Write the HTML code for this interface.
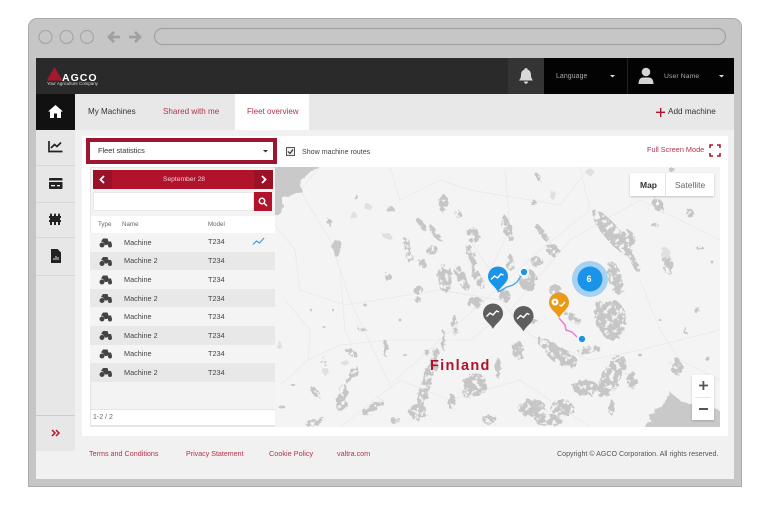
<!DOCTYPE html>
<html><head><meta charset="utf-8"><style>
html,body{margin:0;padding:0;background:#fff}
body{width:768px;height:513px;position:relative;overflow:hidden;font-family:"Liberation Sans",sans-serif;filter:blur(.3px)}
div,span{position:absolute;white-space:nowrap;box-sizing:border-box}
.t{line-height:12px;height:12px}
.r{background:#f4f4f4;left:90px;width:185px}
.r.e{background:#e8e8e8}
.n{left:124px;font-size:7.300px;color:#444}
.m{left:208px;font-size:7.300px;color:#444}
.d{left:36px;width:39px;height:1px;background:#d6d6d6}
.f{color:#b3334a;top:448px}
</style></head><body>
<div style="left:28px;top:18px;width:714px;height:469px;background:#c6c6c6;border:1px solid #ababab;border-radius:9px 9px 0 0"></div>
<svg style="position:absolute;left:0;top:0" width="768" height="60" fill="none">
<circle cx="45.500" cy="37" r="6.500" stroke="#a6a6a6" stroke-width="1.200"/><circle cx="66.500" cy="37" r="6.500" stroke="#a6a6a6" stroke-width="1.200"/><circle cx="87" cy="37" r="6.500" stroke="#a6a6a6" stroke-width="1.200"/>
<path d="M120 37H110M114 32l-5 5 5 5" stroke="#a0a0a0" stroke-width="2.800"/><path d="M129 37H139M135 32l5 5-5 5" stroke="#a0a0a0" stroke-width="2.800"/>
<rect x="154.500" y="28.500" width="571" height="16" rx="8" stroke="#a2a2a2" stroke-width="1.200"/>
</svg>
<div style="left:36px;top:58px;width:698px;height:421px;background:#f1f1f1"></div>
<div style="left:36px;top:58px;width:698px;height:36px;background:#2a2a2a"></div>
<div style="left:508px;top:58px;width:36px;height:36px;background:#343434"></div>
<div style="left:544px;top:58px;width:190px;height:36px;background:#030303"></div>
<div style="left:627px;top:58px;width:1px;height:36px;background:#222"></div>
<svg style="position:absolute;left:46px;top:66px" width="18" height="15"><path d="M8.500 1L16.500 14.500H0.800Z" fill="#a8182c"/></svg>
<div class="t" style="left:62px;top:71.500px;font-size:10.500px;font-weight:bold;color:#fff;letter-spacing:1px">AGCO</div>
<div class="t" style="left:47px;top:78px;font-size:4.400px;color:#ddd">Your Agriculture Company</div>
<svg style="position:absolute;left:518px;top:67px" width="16" height="18"><path d="M8 1c1 0 1.500.7 1.500 1.500C12 3.300 13 5.500 13 8c0 3 1 4 2 5.500H1C2 12 3 11 3 8c0-2.500 1-4.700 3.500-5.500C6.500 1.700 7 1 8 1Z M6 14.500h4C10 16 9 16.800 8 16.800S6 16 6 14.500Z" fill="#d8d8d8"/></svg>
<div class="t" style="left:556px;top:71px;font-size:6.900px;color:#aaa;letter-spacing:.1px">Language</div>
<div class="t" style="left:664px;top:71px;font-size:6.800px;color:#aaa;letter-spacing:.1px">User Name</div>
<svg style="position:absolute;left:610px;top:75px" width="120" height="4" fill="#ddd"><path d="M0 0h5L2.500 2.500Z"/><path d="M109 0h5l-2.500 2.500Z"/></svg>
<svg style="position:absolute;left:637px;top:67px" width="18" height="18" fill="#d4d4d4"><circle cx="9" cy="5" r="4.300"/><path d="M1.500 17c0-4.500 2-6.500 4.500-6.500h6c2.500 0 4.500 2 4.500 6.500Z"/></svg>
<!-- sidebar -->
<div style="left:36px;top:94px;width:39px;height:357px;background:#e7e7e7"></div>
<div style="left:36px;top:94px;width:39px;height:36px;background:#111"></div>
<div class="d" style="top:165px"></div><div class="d" style="top:202px"></div><div class="d" style="top:237px"></div><div class="d" style="top:275px"></div><div class="d" style="top:415px;background:#ccc"></div>
<svg style="position:absolute;left:36px;top:94px" width="39" height="190">
<path d="M19.500 11L12 17.500h2V24h4v-4.500h3V24h4v-6.500h2Z" fill="#fff"/>
<path d="M13 47v10.500h13.500" stroke="#222" stroke-width="1.700" fill="none"/><path d="M15 54l3.500-3.500 2.500 2 4-4" stroke="#222" stroke-width="1.700" fill="none"/>
<rect x="13" y="84" width="13.500" height="11" rx="1" fill="#222"/><rect x="13" y="86.500" width="13.500" height="1.500" fill="#eee"/><rect x="15" y="91" width="4" height="1.300" fill="#eee"/><rect x="21" y="91" width="3" height="1.300" fill="#eee"/>
<path d="M14 120.500l1-1.500 1 1.500V122h2v-1.500l1-1.500 1 1.500V122h2v-1.500l1-1.500 1 1.500V122h1v2h-1v2h1v2h-1v3h-2v-3h-2v3h-2v-3h-2v3h-2v-3h-1v-2h1v-2h-1v-2h1Z" fill="#222"/>
<path d="M15 155h6.500l3.500 3.500V169H15Z" fill="#222"/><path d="M18 166v-2M20 166v-4M22 166v-3" stroke="#ddd" stroke-width="1"/>
</svg>
<svg style="position:absolute;left:51px;top:429px" width="9" height="8" fill="none" stroke="#b0132b" stroke-width="1.500"><path d="M1 1l3 3-3 3M5 1l3 3-3 3"/></svg>
<!-- tabs -->
<div style="left:75px;top:94px;width:659px;height:36px;background:#e8e8e8"></div>
<div style="left:235px;top:94px;width:74px;height:36px;background:#fff"></div>
<div class="t" style="left:88px;top:106px;font-size:8.100px;color:#333">My Machines</div>
<div class="t" style="left:163px;top:106px;font-size:8.100px;color:#b3334a">Shared with me</div>
<div class="t" style="left:247px;top:106px;font-size:8px;color:#b3334a">Fleet overview</div>
<svg style="position:absolute;left:656px;top:108px" width="9" height="9"><path d="M4 0h1.400v3.600H9V5H5.400v4H4V5H0V3.600h4Z" fill="#b0132b"/></svg>
<div class="t" style="left:668px;top:106px;font-size:8.200px;color:#333">Add machine</div>
<!-- panel -->
<div style="left:82px;top:136px;width:646px;height:300px;background:#fff"></div>
<div style="left:86px;top:138px;width:191px;height:26px;background:#fff;border:4px solid #9d1530"></div>
<div class="t" style="left:98px;top:145px;font-size:7.400px;color:#333">Fleet statistics</div>
<svg style="position:absolute;left:263px;top:150px" width="6" height="3"><path d="M0 0h5L2.500 2.500Z" fill="#333"/></svg>
<svg style="position:absolute;left:286px;top:147px" width="10" height="10"><rect x=".5" y=".5" width="8" height="8" fill="#eee" stroke="#555"/><path d="M2 4.500l2 2 3-4" stroke="#333" stroke-width="1.200" fill="none"/></svg>
<div class="t" style="left:302px;top:146px;font-size:7.100px;color:#444">Show machine routes</div>
<div class="t" style="left:647px;top:144px;font-size:7.300px;color:#b3334a">Full Screen Mode</div>
<svg style="position:absolute;left:709px;top:144px" width="12" height="13" fill="none" stroke="#b0132b" stroke-width="1.600"><path d="M1 4V1h3M8 1h3v3M11 9v3H8M4 12H1V9"/></svg>
<!-- map -->
<svg style="position:absolute;left:0;top:0" width="768" height="513">
<defs>
<clipPath id="c"><rect x="275" y="167" width="445" height="260"/></clipPath>
<filter id="j" filterUnits="userSpaceOnUse" x="260" y="150" width="480" height="300"><feTurbulence type="fractalNoise" baseFrequency=".16" numOctaves="3" seed="5"/><feDisplacementMap in="SourceGraphic" scale="6"/></filter>
<filter id="h" filterUnits="userSpaceOnUse" x="260" y="150" width="480" height="300"><feTurbulence type="fractalNoise" baseFrequency=".2" numOctaves="3" seed="8" result="n"/><feDisplacementMap in="SourceGraphic" in2="n" scale="7" result="d"/><feColorMatrix in="n" type="matrix" values="0 0 0 0 0 0 0 0 0 0 0 0 0 0 0 9 0 0 0 -3.100" result="m"/><feComposite in="d" in2="m" operator="in"/></filter>
<path id="pin" d="M0 15.500C-2.500 10-10 6.500-10 0A10 10 0 1 1 10 0C10 6.500 2.500 10 0 15.500Z"/>
<g id="tr" fill="#444"><circle cx="3" cy="7" r="2.500"/><circle cx="11" cy="7.500" r="2"/><path d="M2 3.500L4 .5h4.500l1 3H12l1 3-2-1-3 1.500H6L4 4Z"/></g>
</defs>
<g clip-path="url(#c)">
<rect x="275" y="167" width="445" height="260" fill="#f4f4f4"/>
<g fill="none" stroke="#e8e8e8" stroke-width=".7">
<path d="M320 167L300 190 330 240 342 275 350 300 390 385 440 340 485 300 540 250 590 210 580 167"/>
<path d="M275 225L295 250 300 290 345 305 440 290 500 300 530 335 590 360 640 350 720 330"/>
<path d="M285 300L310 330 308 360 280 385M308 360L340 345 390 340 470 340 510 310 570 240 640 200 720 240"/>
<path d="M390 167L400 200 440 180 470 190 500 195 560 205 590 167M640 280L660 330 680 360 720 380"/>
<path d="M340 270L345 330 352 345M470 240L490 270 510 230 505 170M340 427L400 380 450 400 520 380 590 427"/>
</g>
<g fill="#c9c9c9" filter="url(#j)">
<path d="M272 165H322L308 175 300 182 302 192 292 195 283 198 282 212 272 216Z"/>
<path d="M645 430L652 412 662 408 670 392 682 402 700 406 725 412V430Z"/>
<ellipse cx="337" cy="248" rx="4.500" ry="9"/><ellipse cx="390" cy="209" rx="4" ry="3"/>
</g>
<g fill="#c6c6c6" filter="url(#h)">
<ellipse cx="356" cy="197" rx="2.500" ry="2"/><ellipse cx="329" cy="222" rx="3" ry="3"/>
<ellipse cx="408" cy="250" rx="3" ry="14" transform="rotate(-10 408 250)"/><ellipse cx="443" cy="203" rx="5" ry="9"/><ellipse cx="422" cy="225" rx="3" ry="8" transform="rotate(-35 422 225)"/><ellipse cx="435" cy="233" rx="3" ry="10" transform="rotate(-35 435 233)"/>
<ellipse cx="458" cy="214" rx="3" ry="4"/><ellipse cx="473" cy="235" rx="6" ry="8"/><ellipse cx="472" cy="256" rx="4" ry="12" transform="rotate(-20 472 256)"/><ellipse cx="445" cy="278" rx="7" ry="14"/>
<ellipse cx="422" cy="263" rx="4" ry="5"/><ellipse cx="432" cy="250" rx="6" ry="5"/><ellipse cx="418" cy="290" rx="5" ry="4"/><ellipse cx="388" cy="277" rx="3" ry="4"/><ellipse cx="462" cy="278" rx="5" ry="14" transform="rotate(-25 462 278)"/><ellipse cx="478" cy="278" rx="4" ry="12" transform="rotate(-25 478 278)"/>
<ellipse cx="612" cy="233" rx="8" ry="30" transform="rotate(-40 612 233)"/><ellipse cx="627" cy="240" rx="8" ry="10"/><ellipse cx="634" cy="262" rx="3" ry="12" transform="rotate(-25 634 262)"/><ellipse cx="615" cy="278" rx="7" ry="17" transform="rotate(-15 615 278)"/>
<ellipse cx="668" cy="265" rx="5" ry="10"/><ellipse cx="658" cy="205" rx="5" ry="8" transform="rotate(-30 658 205)"/><ellipse cx="690" cy="213" rx="4" ry="5" transform="rotate(-30 690 213)"/><ellipse cx="542" cy="233" rx="3" ry="11" transform="rotate(-35 542 233)"/><ellipse cx="672" cy="170" rx="3" ry="2.500"/><ellipse cx="533" cy="202" rx="3" ry="3"/><ellipse cx="538" cy="177" rx="2" ry="6" transform="rotate(-30 538 177)"/>
<ellipse cx="507" cy="228" rx="4" ry="14" transform="rotate(-15 507 228)"/><ellipse cx="553" cy="250" rx="6" ry="6"/><ellipse cx="537" cy="262" rx="6" ry="5"/><ellipse cx="528" cy="280" rx="9" ry="11"/><ellipse cx="510" cy="262" rx="4" ry="8"/><ellipse cx="555" cy="290" rx="6" ry="6"/><ellipse cx="505" cy="296" rx="6" ry="6"/>
<ellipse cx="612" cy="320" rx="14" ry="20"/><ellipse cx="600" cy="315" rx="5" ry="14"/><ellipse cx="612" cy="377" rx="9" ry="24" transform="rotate(30 612 377)"/><ellipse cx="562" cy="357" rx="17" ry="8" transform="rotate(25 562 357)"/><ellipse cx="548" cy="345" rx="12" ry="5" transform="rotate(25 548 345)"/><ellipse cx="585" cy="388" rx="14" ry="8"/><ellipse cx="573" cy="318" rx="10" ry="4" transform="rotate(30 573 318)"/><ellipse cx="590" cy="350" rx="12" ry="3" transform="rotate(-10 590 350)"/>
<ellipse cx="677" cy="367" rx="6" ry="8"/><ellipse cx="532" cy="408" rx="14" ry="9"/><ellipse cx="562" cy="408" rx="12" ry="8"/><ellipse cx="548" cy="420" rx="14" ry="6"/><ellipse cx="518" cy="350" rx="6" ry="9"/><ellipse cx="498" cy="368" rx="3" ry="10"/><ellipse cx="632" cy="380" rx="6" ry="8"/><ellipse cx="612" cy="408" rx="3" ry="8"/><ellipse cx="530" cy="320" rx="8" ry="4"/>
<ellipse cx="418" cy="412" rx="9" ry="8"/><ellipse cx="425" cy="385" rx="5" ry="22" transform="rotate(15 425 385)"/><ellipse cx="434" cy="362" rx="4" ry="14" transform="rotate(15 434 362)"/><ellipse cx="342" cy="398" rx="5" ry="14" transform="rotate(10 342 398)"/><ellipse cx="352" cy="375" rx="3" ry="10" transform="rotate(35 352 375)"/><ellipse cx="352" cy="353" rx="8" ry="3" transform="rotate(30 352 353)"/><ellipse cx="385" cy="348" rx="3" ry="8"/><ellipse cx="315" cy="392" rx="3" ry="7" transform="rotate(-35 315 392)"/><ellipse cx="372" cy="408" rx="14" ry="4" transform="rotate(-30 372 408)"/><ellipse cx="315" cy="422" rx="10" ry="3" transform="rotate(-20 315 422)"/>
<ellipse cx="475" cy="385" rx="12" ry="12"/><ellipse cx="452" cy="402" rx="4" ry="8"/><ellipse cx="468" cy="395" rx="4" ry="4"/><ellipse cx="455" cy="325" rx="3" ry="10"/><ellipse cx="443" cy="340" rx="2" ry="10"/><ellipse cx="427" cy="352" rx="3" ry="3"/><ellipse cx="475" cy="302" rx="8" ry="6"/><ellipse cx="418" cy="300" rx="3" ry="3"/><ellipse cx="490" cy="420" rx="7" ry="5"/><ellipse cx="395" cy="420" rx="5" ry="4"/>
<ellipse cx="363" cy="330" rx="4" ry="2"/><ellipse cx="323" cy="360" rx="1.500" ry="5"/><ellipse cx="700" cy="248" rx="4" ry="2"/><ellipse cx="655" cy="225" rx="3" ry="3"/><ellipse cx="697" cy="310" rx="2" ry="4"/><ellipse cx="685" cy="330" rx="1.500" ry="4"/><ellipse cx="707" cy="358" rx="2" ry="3"/>
</g>
<g fill="#c9c9c9"><ellipse cx="311" cy="310" rx="1" ry="1.500"/><ellipse cx="333" cy="310" rx="1" ry="1.500"/><ellipse cx="324" cy="327" rx="1.500" ry="1"/><ellipse cx="293" cy="385" rx="2.500" ry="1"/><ellipse cx="282" cy="407" rx="3.500" ry="1.500"/><ellipse cx="405" cy="355" rx="2" ry="1"/><ellipse cx="400" cy="320" rx="1.500" ry="1.500"/><ellipse cx="365" cy="305" rx="2" ry="1.500"/><ellipse cx="712" cy="262" rx="1.500" ry="1.500"/><ellipse cx="640" cy="184" rx="1" ry="1.500"/><ellipse cx="660" cy="320" rx="1.500" ry="1"/><ellipse cx="640" cy="355" rx="2" ry="1.500"/></g>
<g fill="#e0e0e0" filter="url(#j)"><ellipse cx="368" cy="207" rx="4" ry="3"/><ellipse cx="353" cy="215" rx="3" ry="4"/><ellipse cx="387" cy="236" rx="6" ry="3" transform="rotate(25 387 236)"/><ellipse cx="590" cy="172" rx="4" ry="3"/><ellipse cx="553" cy="195" rx="3" ry="4"/><ellipse cx="665" cy="253" rx="5" ry="5"/><ellipse cx="279" cy="345" rx="2.500" ry="4"/><ellipse cx="345" cy="363" rx="4" ry="3"/><ellipse cx="326" cy="372" rx="3" ry="4"/></g>
<polyline points="498,292 507,287 513,285 517,282 523,273" fill="none" stroke="#4aa3e8" stroke-width="1.300"/>
<polyline points="559,318 565,325 566,330 572,332 577,337" fill="none" stroke="#ee7ad8" stroke-width="1.500"/>
<circle cx="524" cy="272" r="5" fill="#fff"/><circle cx="524" cy="272" r="3.200" fill="#1a94e8"/>
<circle cx="582" cy="339" r="4.500" fill="#fff"/><circle cx="582" cy="339" r="3.200" fill="#1a94e8"/>
<circle cx="590" cy="279" r="18" fill="#a5d2f2"/><circle cx="590" cy="279" r="12.500" fill="#1a94e8"/>
<use href="#pin" x="498" y="276.500" fill="#1a94e8"/><use href="#pin" x="493" y="313.500" fill="#5e5e5e"/><use href="#pin" x="523.500" y="316" fill="#5e5e5e"/><use href="#pin" x="559" y="302.500" fill="#e89a18"/>
<g fill="none" stroke="#fff" stroke-width="1.400">
<path d="M491 279.500l3.500-3.500 3 2 3.500-4 2.500 1"/><path d="M486.500 316.500l3.500-3.500 3 2 3.500-4 2.500 1"/><path d="M517 319l3.500-3.500 3 2 3.500-4 2.500 1"/><path d="M559.500 305l2 1 3.500-4"/>
</g>
<circle cx="555" cy="302" r="3.500" fill="#fff"/><circle cx="555" cy="302" r="1.200" fill="#e89a18"/>
</g>
</svg>
<div class="t" style="left:430px;top:358px;height:16px;line-height:16px;font-size:14.500px;font-weight:bold;color:#b0132b;letter-spacing:1.300px">Finland</div>
<div class="t" style="left:586.500px;top:273px;font-size:9px;font-weight:bold;color:#fff">6</div>
<div style="left:630px;top:173px;width:84px;height:23px;background:#fff;box-shadow:0 1px 2px rgba(0,0,0,.2)"></div>
<div style="left:665px;top:173px;width:1px;height:23px;background:#e6e6e6"></div>
<div class="t" style="left:640px;top:179px;font-size:8.500px;font-weight:bold;color:#333">Map</div>
<div class="t" style="left:675px;top:179px;font-size:8.500px;color:#666">Satellite</div>
<div style="left:692px;top:375px;width:22px;height:45px;background:#fff;box-shadow:0 1px 2px rgba(0,0,0,.2)"></div>
<div style="left:695px;top:397px;width:16px;height:1px;background:#e6e6e6"></div>
<svg style="position:absolute;left:698px;top:380px" width="11" height="36" fill="#555"><path d="M4.500 1h1.800v3.600H10v1.800H6.300V10H4.500V6.400H1V4.600h3.500Z"/><rect x="1" y="28" width="9" height="2"/></svg>
<!-- list -->
<div style="left:90px;top:167px;width:185px;height:260px;background:#f3f3f3;border:1px solid #e6e6e6;border-right:0"></div>
<div style="left:93px;top:170px;width:180px;height:19px;background:#b0132b;border-radius:1px"></div>
<div style="left:93px;top:170px;width:19px;height:19px;background:#9a1128"></div>
<div style="left:254px;top:170px;width:19px;height:19px;background:#9a1128"></div>
<svg style="position:absolute;left:93px;top:170px" width="180" height="19" fill="none" stroke="#fff" stroke-width="1.800"><path d="M11 6L7.500 9.500 11 13M169 6l3.500 3.500L169 13"/></svg>
<div class="t" style="left:163px;top:174px;font-size:6.700px;color:#f3cdd3">September 28</div>
<div style="left:93px;top:192px;width:161px;height:19px;background:#fff;border:1px solid #e8e8e8"></div>
<div style="left:254px;top:192px;width:18px;height:19px;background:#b0132b"></div>
<svg style="position:absolute;left:258px;top:197px" width="10" height="10" fill="none" stroke="#fff" stroke-width="1.500"><circle cx="4" cy="4" r="2.700"/><path d="M6 6l3 3"/></svg>
<div style="left:91px;top:216px;width:184px;height:17px;background:#fff"></div>
<div class="t" style="left:98px;top:219px;font-size:6.200px;color:#666">Type</div>
<div class="t" style="left:122px;top:219px;font-size:6.200px;color:#666">Name</div>
<div class="t" style="left:208px;top:219px;font-size:6.200px;color:#666">Model</div>
<div class="r" style="top:233px;height:19px"></div><div class="r e" style="top:252px;height:18px"></div><div class="r" style="top:270px;height:19px"></div><div class="r e" style="top:289px;height:18px"></div><div class="r" style="top:307px;height:19px"></div><div class="r e" style="top:326px;height:19px"></div><div class="r" style="top:345px;height:18px"></div><div class="r e" style="top:363px;height:19px"></div>
<div class="t n" style="top:237px">Machine</div><div class="t m" style="top:236px">T234</div>
<div class="t n" style="top:255px">Machine 2</div><div class="t m" style="top:255px">T234</div>
<div class="t n" style="top:274px">Machine</div><div class="t m" style="top:274px">T234</div>
<div class="t n" style="top:293px">Machine 2</div><div class="t m" style="top:293px">T234</div>
<div class="t n" style="top:311px">Machine</div><div class="t m" style="top:311px">T234</div>
<div class="t n" style="top:330px">Machine 2</div><div class="t m" style="top:330px">T234</div>
<div class="t n" style="top:348px">Machine</div><div class="t m" style="top:348px">T234</div>
<div class="t n" style="top:367px">Machine 2</div><div class="t m" style="top:367px">T234</div>
<svg style="position:absolute;left:99px;top:237px" width="16" height="145">
<use href="#tr" y="1"/><use href="#tr" y="19.500"/><use href="#tr" y="38"/><use href="#tr" y="56.500"/><use href="#tr" y="75"/><use href="#tr" y="93.500"/><use href="#tr" y="112"/><use href="#tr" y="130.500"/>
</svg>
<svg style="position:absolute;left:252px;top:237px" width="14" height="9" fill="none" stroke="#3f9ae6" stroke-width="1.200"><path d="M1 7.500l3.500-3.500 3 2 4.500-5"/></svg>
<div style="left:90px;top:409px;width:185px;height:17px;background:#fff;border-top:1px solid #e4e4e4;border-bottom:1px solid #e4e4e4;border-left:1px solid #e4e4e4"></div>
<div class="t" style="left:93px;top:412px;font-size:7px;color:#666">1-2 / 2</div>
<!-- footer -->
<div class="t f" style="left:89px;font-size:7.200px">Terms and Conditions</div>
<div class="t f" style="left:186px;font-size:7.100px">Privacy Statement</div>
<div class="t f" style="left:269px;font-size:7.300px">Cookie Policy</div>
<div class="t f" style="left:337px;font-size:7.200px">valtra.com</div>
<div class="t" style="left:557px;top:448px;font-size:7.100px;color:#555">Copyright © AGCO Corporation. All rights reserved.</div>
</body></html>
